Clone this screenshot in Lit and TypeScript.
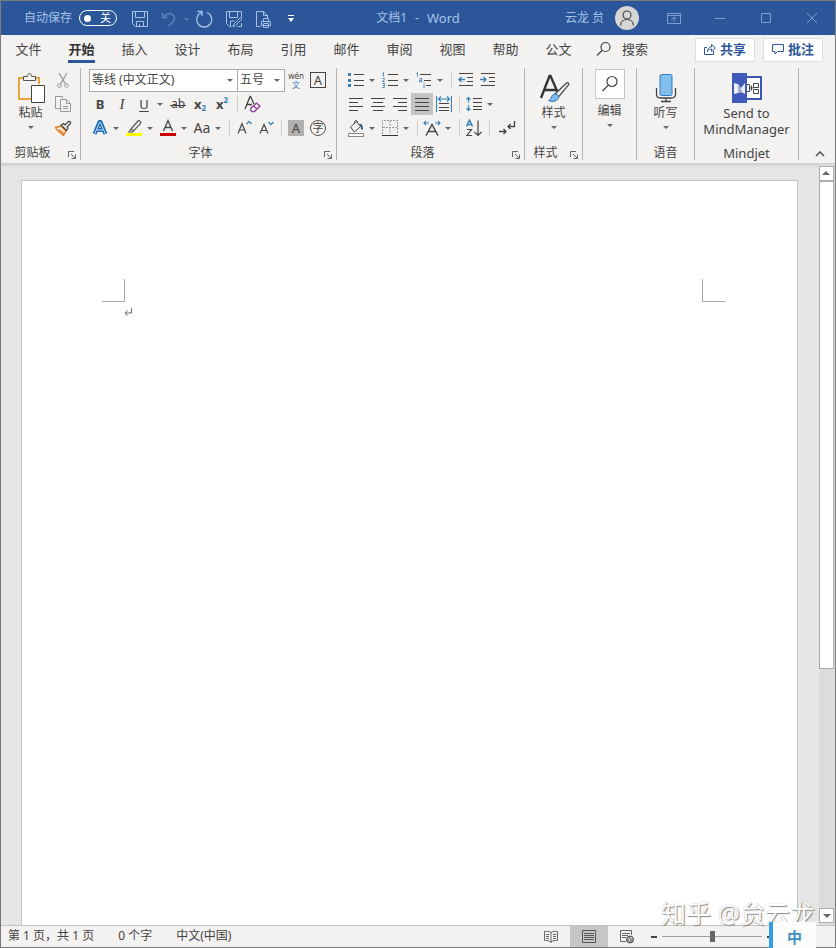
import { LitElement, html, css, svg, TemplateResult } from "lit";
import { customElement, state } from "lit/decorators.js";

const icon = (w: number, h: number, body: TemplateResult) =>
  html`<svg width=${w} height=${h} viewBox="0 0 ${w} ${h}" fill="none" stroke="currentColor" aria-hidden="true">${body}</svg>`;

const INK = "#444";
const BLUE = "#3a82b8";

/* ---- title bar ---- */
const saveIcon = icon(18, 18, svg`<path d="M1.5 1.5h15v15h-12l-3-3zM4.5 1.5v6h9v-6M5.5 16.500v-5h7v5M8.500 14v2.500"/>`);
const undoIcon = icon(16, 16, svg`<path stroke-width="1.500" d="M1.500 1.500v5h5M2 6.500C5 2 10 1.500 12.500 4.500s.5 6-5 10.500"/>`);
const redoIcon = icon(18, 18, svg`<path stroke-width="1.300" d="M2.500 1.500h4.500v4.500M6.500 2.500A7.500 7.500 0 1 0 12 2.500"/>`);
const saveEditIcon = icon(18, 18, svg`<path d="M6.500 16.500h-2l-3-3v-12h15v6M4.500 1.500v6h8v-6M5.500 16v-5h4M16.500 13v3.500h-4M15.500 7.500l1.500 1.500-6.500 6.500-2.500 1 1-2.500z"/>`);
const printIcon = icon(18, 18, svg`<path d="M5.500 16.500h-4v-15h7l4 4v3M8.500 1.500v4h4M8.500 11.500v-3h5v3M6.500 15.500v-4h9v4zM8.500 13.500h5v4h-5z"/>`);
const customizeIcon = icon(8, 8, svg`<path d="M1 .5h6"/><path fill="currentColor" stroke="none" d="M1 3h6l-3 4z"/>`);
const personIcon = icon(18, 18, svg`<g stroke="#4a4a4a" stroke-width="1.200"><circle cx="9" cy="6" r="4"/><path d="M2.500 16.500c.5-8 12.500-8 13 0"/></g>`);
const ribbonOptIcon = icon(14, 12, svg`<path d="M.5 1.500h13v10H.5zM.5 3.500h13M7 10V5M4.500 7.500L7 5l2.500 2.500"/>`);
const minIcon = icon(12, 12, svg`<path d="M1 6.500h10"/>`);
const maxIcon = icon(12, 12, svg`<path d="M1.500 1.500h9v9h-9z"/>`);
const closeIcon = icon(12, 12, svg`<path d="M1 1l10 10M11 1L1 11"/>`);

/* ---- tabs ---- */
const searchIcon = icon(16, 16, svg`<circle cx="9.500" cy="6" r="4.500" stroke-width="1.200"/><path stroke-width="1.300" d="M6.300 9.300L1 14.500"/>`);
const findIcon = icon(18, 18, svg`<circle cx="11" cy="6.500" r="5" stroke-width="1.200"/><path stroke-width="1.300" d="M7.400 10.100L1.500 16"/>`);
const shareIcon = icon(12, 12, svg`<path d="M3 4.500H.5v7h9V8M3.500 8.500C3.500 5 5.500 4 7.500 4V1.500l4 3.500-4 3.500V6C6 6 4.500 6.500 3.500 8.500z"/>`);
const commentIcon = icon(12, 12, svg`<path d="M.5 1.500h11v7h-6l-2.500 2.500V8.500H.5z"/>`);

/* ---- clipboard ---- */
const pasteIcon = icon(28, 32, svg`
  <path stroke="#e8a33d" stroke-width="2" d="M8 6H2v21h12M18 6h4v6"/>
  <path stroke="#fff" d="M3.500 25V7.500h3"/>
  <path stroke="#555" fill="#f3f2f1" d="M6.500 8.500v-4h4c0-4 4-4 4 0h4v4z"/>
  <path stroke="#444" fill="#fff" d="M14.500 13.500h13v17h-13z"/>`);
const cutIcon = icon(16, 16, svg`<g stroke="#999"><path stroke-width="1.300" d="M4 1l6.500 11M12 1L5.500 12"/><circle cx="4.500" cy="13.500" r="1.800"/><circle cx="11.500" cy="13.500" r="1.800"/></g>`);
const copyIcon = icon(18, 16, svg`<g stroke="#999"><path d="M6.500 12.500h-5v-12h7v2"/><path d="M6.500 3.500h6l4 4v8h-10zM12.500 3.500v4h4M9 10.500h5M9 12.500h5"/></g>`);
const painterIcon = icon(18, 18, svg`<path fill="#fbe3c8" stroke="#e07b28" stroke-width="1.300" d="M1.500 8.500L7 7l5 5-2.500 4.500C8 15 3 12 1.500 8.500zM5 11l5 3.500"/><path stroke="#444" stroke-width="1.200" d="M7 6l5.500 5.500 1.500-2.500-1-1 3.500-3.500c.5-1.500-.8-2.500-2-2L11 6l-1.500-1.500z" fill="#f3f2f1"/>`);

/* ---- font ---- */
const clearIcon = icon(18, 18, svg`<path stroke="#444" stroke-width="1.300" d="M2 14L7 1.500h.5L11 9M4 9.500h5"/><path stroke="#8c3a9e" stroke-width="1.300" fill="#f3f2f1" d="M8 13l5.500-5 3.500 3-5.500 5.500-2.500.2-1.500-1.700zM10.500 10.800l3.500 3.200"/>`);
const effectsIcon = icon(16, 16, svg`<path stroke="#1f6db5" stroke-width="4" stroke-linejoin="round" d="M2.500 14L7.500 2h1l5 12M4.500 10h7"/><path stroke="#bfe0f7" stroke-width="1" d="M2.500 14L7.500 2.500h1l5 11.500M4.500 10h7"/>`);
const highlightIcon = icon(18, 18, svg`<path stroke="#555" stroke-width="1.200" d="M6 10l7-8c1-1 3.500 1 2.500 2.500l-7 7.500zM6 10l-2 3h3.500l1-1"/><path fill="#ff0" stroke="none" d="M1 14h16v3H1z"/>`);
const fontColorIcon = icon(18, 18, svg`<path stroke="#444" stroke-width="1.300" d="M4.500 12L9 1.500 13.500 12M6 8.500h6"/><path fill="#c00" stroke="none" d="M1 14h16v3H1z"/>`);
const growIcon = icon(16, 16, svg`<path stroke="#444" stroke-width="1.200" d="M2 13.500L6 3.500l4 10M3.500 10h5"/><path stroke=${BLUE} stroke-width="1.300" d="M10.500 4l2.500-2.500L15.500 4"/>`);
const shrinkIcon = icon(16, 16, svg`<path stroke="#444" stroke-width="1.200" d="M2 13.500L6 4.500l4 9M3.500 10.500h5"/><path stroke=${BLUE} stroke-width="1.300" d="M10.500 2l2.500 2.500L15.500 2"/>`);

/* ---- paragraph ---- */
const lines = (x: number, ys: number[], w: number) => ys.map((y) => svg`<path stroke=${INK} d="M${x} ${y}.5h${w}"/>`);
const bulletsIcon = icon(16, 16, svg`${lines(6, [2, 8, 13], 10)}<path fill=${BLUE} stroke="none" d="M0 1h3v3H0zM0 7h3v3H0zM0 12h3v3H0z"/>`);
const numbersIcon = icon(16, 16, svg`${lines(6, [2, 8, 13], 10)}<path stroke=${BLUE} stroke-width=".9" d="M.5 1.500L1.500.5v4M.3 6.500h2v1.300L.5 9.500h2.200M.3 11.500h2v4h-2M1 13.500h1.300"/>`);
const multiIcon = icon(16, 16, svg`${lines(4, [2], 11)}${lines(8, [8], 7)}${lines(10, [13], 5)}<path stroke=${BLUE} stroke-width=".9" d="M.5 1.500L1.500.5v4M3.500 6.500h2.200v3.300H3.500V8.200h2M8 12v4M8 10v1"/>`);
const outdentIcon = icon(16, 16, svg`${lines(1, [1, 13], 14)}${lines(9, [5, 9], 6)}<path stroke=${BLUE} stroke-width="1.300" d="M1 7.500h6M3.500 5L1 7.500 3.500 10"/>`);
const indentIcon = icon(16, 16, svg`${lines(1, [1, 13], 14)}${lines(9, [5, 9], 6)}<path stroke=${BLUE} stroke-width="1.300" d="M0 7.500h6M3.500 5L6 7.500 3.500 10"/>`);
const leftIcon = icon(16, 16, svg`${lines(1, [2, 10], 14)}${lines(1, [6, 14], 9)}`);
const centerIcon = icon(16, 16, svg`${lines(1, [2, 10], 14)}${lines(3, [6, 14], 10)}`);
const rightIcon = icon(16, 16, svg`${lines(1, [2, 10], 14)}${lines(6, [6, 14], 9)}`);
const justifyIcon = icon(16, 16, svg`${lines(1, [2, 6, 10, 14], 14)}`);
const distributeIcon = icon(16, 18, svg`${lines(3, [8, 12, 15], 10)}<path stroke=${BLUE} stroke-width="1.200" d="M.5 1v16M15.500 1v16M2.500 4h11M5 1.500L2.500 4 5 6.500M11 1.500L13.500 4 11 6.500"/>`);
const spacingIcon = icon(16, 16, svg`${lines(7, [2, 6, 10, 13], 9)}<path stroke=${BLUE} stroke-width="1.200" d="M2.500 1v5.500M.5 3.500l2-2 2 2M2.500 9v6M.5 12.500l2 2 2-2"/>`);
const bucketIcon = icon(18, 18, svg`<path stroke="#444" d="M3.500 8l6-5.500 4 5-6 5.500zM7.500 5c-.5-4 3-5 3-1"/><path stroke="#1f5f99" stroke-width="2" d="M12.500 5.500c2 0 2.500 2 2.500 5"/><path stroke="#888" fill="#fff" d="M1.500 14.500h15v3h-15z"/>`);
const bordersIcon = icon(16, 16, svg`<path stroke="#999" stroke-dasharray="2 1" d="M.5 14V.5h15V14M8 1v13M1 7.500h14"/><path stroke="#333" d="M0 15.500h16"/>`);
const asianIcon = icon(18, 18, svg`<path stroke="#444" stroke-width="1.500" d="M3 16.500L9 5.500l6 11M5.500 12.500h7"/><path stroke=${BLUE} stroke-width="1.200" d="M1 4h5M3 1.800L1 4l2 2.200M12 4h5M15 1.800L17 4l-2 2.200"/>`);
const sortIcon = icon(18, 18, svg`<path stroke=${BLUE} stroke-width="1.500" d="M1.500 7.500L4.500 1l3 6.500M2.500 5.500h4"/><path stroke="#444" stroke-width="1.200" d="M2 10.500h4.500L2 16.500h5M13 1.500v15M9.500 13l3.500 3.500 3.500-3.500"/>`);
const marksIcon = icon(18, 18, svg`<path stroke="#444" stroke-width="1.300" d="M16.500 2v5.500H10M12.500 5L10 7.500l2.500 2.500M1 12.500h7M5.500 10L8 12.500 5.500 15"/>`);

/* ---- large buttons ---- */
const stylesIcon = icon(32, 32, svg`
  <path stroke="#333" stroke-width="2.300" d="M3 26L11.500 4h1L20 21M6 18h12"/>
  <path stroke="#444" fill="#f3f2f1" stroke-width="1.200" d="M17 22L28.500 11c1.500-1 3 .5 2 2L20.500 25z"/>
  <path stroke="#1f6db5" fill="#83beec" d="M10.500 28.500c3 0 2-6 6.500-6.500 3 0 5 3 2.500 5.500-2 2-6 2.500-9 1z"/>`);
const micIcon = icon(22, 30, svg`
  <rect x="5" y="1.500" width="12" height="21" rx="1.500" fill="#83beec" stroke="#2b7cc1"/>
  <path stroke="#444" stroke-width="1.300" d="M1.500 15v6q0 4 4 4h11q4 0 4-4v-6M11 25v4M6 28.500h10"/>`);
const mindIcon = icon(30, 30, svg`
  <path fill="#fff" stroke="#3b55b0" stroke-width="2" d="M14 4h15v22H14z"/>
  <path fill="#3f5abb" stroke="none" d="M0 0h15v30H0z"/>
  <path fill="#e9edf7" stroke="none" d="M2 10l4 1 3 4 4-5v11l-4-2-3 1-4 1z"/><path fill="#9fb0d8" stroke="none" d="M6 11l3 4 1 4-4 1z"/>
  <path stroke="#444" d="M15 11.500h2.500v7H15M17.500 15h4M19.500 12.500v5M21.500 10.500h5v4h-5zM21.500 16.500h5v4h-5z"/>`);
const launcherIcon = icon(8, 8, svg`<path stroke="#666" d="M.5 6V.5H6M3 3l4 4M7.500 3.500v4h-4"/>`);
const collapseIcon = icon(10, 6, svg`<path stroke="#555" stroke-width="1.600" d="M1 5l4-4 4 4"/>`);

/* ---- status bar ---- */
const readIcon = icon(14, 13, svg`<path stroke="#666" d="M7 2.500C5 1 3 1.500.5 1.500v9c2.500 0 4.500 0 6.500 1.500 2-1.500 4-1.500 6.500-1.500v-9c-2.500 0-4.500-.5-6.500 1zM7 2.500V13M2 4.500h3M2 6.500h3M2 8.500h3M9 4.500h3M9 6.500h3M9 8.500h3"/>`);
const printViewIcon = icon(14, 13, svg`<path stroke="#555" d="M.5.5h13v12H.5zM2 3.500h10M2 5.500h10M2 7.500h10M2 9.500h10"/>`);
const webIcon = icon(14, 14, svg`<path stroke="#666" d="M6 11.500H.5V.5h11V5M2 3.500h8M2 5.500h6M2 7.500h4"/><circle cx="10" cy="9.500" r="3.500" fill="#888" stroke="#555"/><path stroke="#ddd" d="M8 8l2 1.500-1 2M11 7l1 2"/>`);

@customElement("app-root")
export class AppRoot extends LitElement {
  @state() private tab = "开始";

  static styles = css`
    :host {
      display: block;
      height: 100vh;
      font: 12px/16px "Noto Sans", "Noto Sans CJK SC", sans-serif;
      color: #444;
    }
    * { box-sizing: border-box; }
    svg { display: block; flex: none; }
    button, select, input { font: inherit; color: inherit; margin: 0; }
    button {
      display: flex; align-items: center; justify-content: center;
      border: 0; padding: 0; background: none; white-space: nowrap;
    }
    .window {
      position: relative; height: 100%; min-width: 834px;
      display: flex; flex-direction: column;
      border: 1px solid #7b7b7b; background: #f3f2f1;
    }
    .titlebar {
      flex: none; height: 34px; display: grid; grid-template-columns: 1fr auto 1fr;
      align-items: center; background: #2b579a; color: #a9c1e6;
    }
    .quick { display: flex; align-items: center; padding-left: 23px; }
    .autosave { display: flex; align-items: center; gap: 7px; margin-right: 8px; }
    .toggle {
      display: flex; align-items: center; justify-content: space-between;
      width: 38px; height: 16px; padding: 0 5px 0 4px;
      border: 1px solid #fff; border-radius: 8px; color: #fff; font-size: 11px;
    }
    .toggle input { appearance: none; width: 7px; height: 7px; border-radius: 4px; background: #fff; }
    .quick button { width: 30px; height: 30px; padding-top: 2px; }
    .quick .undo { width: 28px; color: #5c80ba; }
    .quick .undo-menu { width: 6px; color: #5c80ba; }
    .quick .customize { width: 24px; color: #fff; }
    .doc-title { display: flex; gap: 8px; }
    .doc-title b { font-weight: 400; font-size: 13px; }
    .account { display: flex; align-items: center; justify-content: flex-end; }
    .avatar {
      width: 24px; height: 24px; margin: 0 12px 0 11px; border-radius: 12px; background: #d8d6d4;
    }
    .caption { width: 46px; height: 34px; color: #7f9fd0; }

    .tabs { flex: none; height: 31px; display: flex; padding: 0 12px 0 1px; font-size: 13px; }
    .tab { width: 53px; height: 30px; padding-bottom: 3px; position: relative; }
    .tab.active { font-weight: 700; color: #333; }
    .tab.active::after {
      content: ""; position: absolute; left: 13px; right: 13px; bottom: 2px; height: 3px; background: #2b579a;
    }
    .search { gap: 10px; margin-left: 11px; height: 30px; padding-bottom: 3px; }
    .actions { display: flex; gap: 8px; margin: 3px 0 0 auto; }
    .actions button {
      width: 60px; height: 24px; padding-bottom: 2px; gap: 4px; border: 1px solid #e1dfdd; background: #fff;
      color: #2b579a; font-weight: 700;
    }

    .ribbon {
      flex: none; height: 98px; display: flex; padding: 2px 0 3px; border-bottom: 1px solid #d2d0ce;
    }
    .group {
      flex: none; display: flex; flex-direction: column; border-right: 1px solid #b5b3b1;
    }
    .g-clip { width: 80px; }
    .g-font { width: 256px; }
    .g-para { width: 188px; }
    .g-style { width: 58px; }
    .g-edit { width: 54px; }
    .g-voice { width: 58px; }
    .g-mind { width: 104px; }
    .body { flex: 1; display: flex; }
    .rows { display: flex; flex-direction: column; padding-left: 8px; }
    .row { display: flex; align-items: center; height: 24px; }
    .foot { display: flex; height: 16px; line-height: 18px; }
    .foot span { flex: 1; text-align: center; }
    .foot button { width: 16px; height: 22px; }
    .latin { font-size: 13px; }
    .tool { width: 22px; height: 22px; }
    .tool.wide { width: 28px; }
    .tool.on { background: #c5c3c1; }
    .menu { width: 12px; height: 22px; justify-content: flex-start; padding-left: 2px; }
    .sep { width: 8px; height: 18px; display: flex; justify-content: center; }
    .sep::before { content: ""; width: 1px; background: #d2d0ce; }
    .arrow { width: 0; height: 0; border: 3px solid transparent; border-top-color: #666; border-bottom-width: 0; }
    .combo { position: relative; height: 23px; border: 1px solid #ababab; background: #fff; }
    .combo + .combo { border-left: 0; }
    .combo.face { width: 149px; }
    .combo.size { width: 47px; }
    .combo select {
      appearance: none; width: 100%; height: 21px; padding: 0 2px; border: 0; background: none; outline: 0;
    }
    .combo .arrow { position: absolute; right: 4px; top: 9px; pointer-events: none; }
    .bold { font-weight: 700; font-size: 13px; }
    .italic { font: italic 15px/16px "Liberation Serif", serif; }
    .underline { text-decoration: underline; font-size: 13px; text-underline-offset: 2px; }
    .strike span { padding: 0 1px; background: linear-gradient(#444, #444) center 9px / 100% 1px no-repeat; }
    .script { font-weight: 700; font-size: 13px; }
    .script small { font-size: 8px; color: #3a82b8; }
    .script .low { padding-top: 8px; }
    .script .high { padding-bottom: 8px; }
    .pinyin { flex-direction: column; font-size: 8px; line-height: 9px; }
    .pinyin em { font-style: normal; color: #3a82b8; }
    .case { font-size: 14px; }
    .boxed { width: 16px; height: 16px; border: 1px solid #444; line-height: 14px; font-size: 13px; }
    .shaded { width: 16px; height: 16px; background: #b1b0af; font-size: 13px; }
    .circled { width: 16px; height: 16px; border: 1px solid #555; border-radius: 8px; font-size: 11px; line-height: 14px; }

    .large { flex: 1; flex-direction: column; justify-content: flex-start; height: 70px; }
    .large .pic { height: 37px; display: flex; align-items: center; justify-content: center; padding-top: 2px; }
    .large .arrow { margin-top: 5px; }
    .large .search-box { width: 30px; height: 30px; margin: 1px 0 4px; padding: 0; border: 1px solid #c8c6c4; background: #fff; }
    .large.paste { flex: none; width: 43px; margin-left: 8px; }
    .column { display: flex; flex-direction: column; }
    .column .tool { height: 24px; }
    .collapse { margin: auto 0 0 auto; width: 30px; height: 12px; }

    .work { flex: 1; min-height: 0; display: flex; background: #e6e6e6; box-shadow: inset 0 3px 3px -2px #c4c4c4; }
    .canvas { flex: 1; display: flex; padding: 16px 21px 0 20px; }
    .page { flex: 1; border: 1px solid #c3c3c3; border-bottom: 0; background: #fff; }
    .marks { display: flex; justify-content: space-between; padding: 98px 72px 0 80px; }
    .corner { width: 23px; height: 23px; border-bottom: 1px solid #aaa; }
    .corner.left { border-right: 1px solid #aaa; }
    .corner.right { border-left: 1px solid #aaa; }
    .pilcrow { margin: 6px 0 0 102px; color: #666; }
    .scroll { width: 16px; flex: none; display: flex; flex-direction: column; padding: 2px 1px 2px 0; background: #dcdcdc; }
    .scroll button { height: 15px; flex: none; border: 1px solid #ababab; background: #fff; }
    .scroll .up { transform: rotate(180deg); }
    .scroll .arrow { border-width: 4px 4px 0; }
    .thumb { flex: 67; border: 1px solid #ababab; background: #fff; }
    .track { flex: 33; }

    .status {
      flex: none; height: 22px; display: flex; align-items: center; padding: 0 57px 0 7px;
      border-top: 1px solid #c6c4c2;
    }
    .status span { margin-right: 24px; padding-bottom: 2px; }
    .views { display: flex; margin-left: auto; }
    .views button { width: 38px; height: 21px; }
    .views .on { background: #c8c6c4; }
    .zoom-btn { width: 16px; height: 20px; }
    .zoom { appearance: none; width: 100px; height: 20px; background: linear-gradient(#a0a0a0, #a0a0a0) center / 100% 1px no-repeat; }
    .zoom::-webkit-slider-thumb { appearance: none; width: 5px; height: 11px; background: #666; }

    .ime {
      position: absolute; right: 19px; bottom: -1px; width: 47px; height: 26px;
      display: flex; align-items: center; justify-content: center; padding-top: 4px;
      border-left: 4px solid #2f9fe8; background: #fcfcfc; color: #3f8fc4; font-size: 15px; font-weight: 700;
    }
    .watermark {
      position: absolute; right: 20px; bottom: 20px; font-size: 25px; line-height: 28px; white-space: nowrap;
      color: #fff; text-shadow: 1px 1px 1px #888, 0 0 1px #aaa; pointer-events: none;
    }
  `;

  private tool(label: string, content: unknown, cls = "") {
    return html`<button class="tool ${cls}" aria-label=${label} title=${label}>${content}</button>`;
  }
  private menu(label: string) {
    return html`<button class="menu" aria-label="${label}选项"><i class="arrow"></i></button>`;
  }
  private foot(label: string, launcher = true, cls = "") {
    return html`<div class="foot ${cls}"><span>${label}</span>${launcher
      ? html`<button aria-label="${label}设置">${launcherIcon}</button>` : ""}</div>`;
  }

  private titlebar() {
    return html`<header class="titlebar">
      <div class="quick">
        <label class="autosave">自动保存
          <span class="toggle"><input type="checkbox" role="switch" />关</span>
        </label>
        <button aria-label="保存">${saveIcon}</button>
        <button class="undo" aria-label="撤消">${undoIcon}</button>
        <button class="undo-menu" aria-label="撤消选项">${icon(5, 3, svg`<path fill="currentColor" stroke="none" d="M0 0h5L2.500 3z"/>`)}</button>
        <button aria-label="重复">${redoIcon}</button>
        <button aria-label="另存为">${saveEditIcon}</button>
        <button aria-label="打印预览">${printIcon}</button>
        <button class="customize" aria-label="自定义快速访问工具栏">${customizeIcon}</button>
      </div>
      <div class="doc-title"><span>文档1</span><span>-</span><b>Word</b></div>
      <div class="account">
        <span>云龙 贠</span>
        <button class="avatar" aria-label="帐户">${personIcon}</button>
        <button class="caption" aria-label="功能区显示选项">${ribbonOptIcon}</button>
        <button class="caption" aria-label="最小化">${minIcon}</button>
        <button class="caption" aria-label="最大化">${maxIcon}</button>
        <button class="caption" aria-label="关闭">${closeIcon}</button>
      </div>
    </header>`;
  }

  private tabs() {
    const names = ["文件", "开始", "插入", "设计", "布局", "引用", "邮件", "审阅", "视图", "帮助", "公文"];
    return html`<nav class="tabs">
      ${names.map((n) => html`<button class="tab ${n === this.tab ? "active" : ""}" @click=${() => (this.tab = n)}>${n}</button>`)}
      <button class="search">${searchIcon}搜索</button>
      <div class="actions">
        <button>${shareIcon}共享</button>
        <button>${commentIcon}批注</button>
      </div>
    </nav>`;
  }

  private ribbon() {
    const sep = html`<i class="sep"></i>`;
    return html`<section class="ribbon">
      <div class="group g-clip">
        <div class="body">
          <button class="large paste"><span class="pic">${pasteIcon}</span>粘贴<i class="arrow"></i></button>
          <div class="column">${this.tool("剪切", cutIcon)}${this.tool("复制", copyIcon)}${this.tool("格式刷", painterIcon)}</div>
        </div>
        ${this.foot("剪贴板")}
      </div>
      <div class="group g-font">
        <div class="body rows">
          <div class="row">
            <div class="combo face"><select aria-label="字体"><option>等线 (中文正文)</option></select><i class="arrow"></i></div>
            <div class="combo size"><select aria-label="字号"><option>五号</option></select><i class="arrow"></i></div>
            ${this.tool("拼音指南", html`wén<em>文</em>`, "pinyin")}
            ${this.tool("字符边框", html`<span class="boxed">A</span>`)}
          </div>
          <div class="row">
            ${this.tool("加粗", "B", "bold")}${this.tool("倾斜", "I", "italic")}${this.tool("下划线", "U", "underline")}${this.menu("下划线")}
            ${this.tool("删除线", html`<span>ab</span>`, "strike")}
            ${this.tool("下标", html`x<small class="low">2</small>`, "script")}
            ${this.tool("上标", html`x<small class="high">2</small>`, "script")}
            ${sep}${this.tool("清除格式", clearIcon)}
          </div>
          <div class="row">
            ${this.tool("文本效果", effectsIcon)}${this.menu("文本效果")}
            ${this.tool("突出显示", highlightIcon)}${this.menu("突出显示")}
            ${this.tool("字体颜色", fontColorIcon)}${this.menu("字体颜色")}
            ${this.tool("更改大小写", "Aa", "case")}${this.menu("更改大小写")}
            ${sep}${this.tool("增大字号", growIcon)}${this.tool("减小字号", shrinkIcon)}
            ${sep}${this.tool("字符底纹", html`<span class="shaded">A</span>`)}
            ${this.tool("带圈字符", html`<span class="circled">字</span>`)}
          </div>
        </div>
        ${this.foot("字体")}
      </div>
      <div class="group g-para">
        <div class="body rows">
          <div class="row">
            ${this.tool("项目符号", bulletsIcon)}${this.menu("项目符号")}${this.tool("编号", numbersIcon)}${this.menu("编号")}
            ${this.tool("多级列表", multiIcon)}${this.menu("多级列表")}${sep}
            ${this.tool("减少缩进量", outdentIcon)}${this.tool("增加缩进量", indentIcon)}
          </div>
          <div class="row">
            ${this.tool("左对齐", leftIcon)}${this.tool("居中", centerIcon)}${this.tool("右对齐", rightIcon)}
            ${this.tool("两端对齐", justifyIcon, "on")}${this.tool("分散对齐", distributeIcon)}${sep}
            ${this.tool("行距", spacingIcon)}${this.menu("行距")}
          </div>
          <div class="row">
            ${this.tool("底纹", bucketIcon)}${this.menu("底纹")}${this.tool("边框", bordersIcon)}${this.menu("边框")}${sep}
            ${this.tool("中文版式", asianIcon)}${this.menu("中文版式")}${sep}${this.tool("排序", sortIcon)}${sep}
            ${this.tool("显示编辑标记", marksIcon, "wide")}
          </div>
        </div>
        ${this.foot("段落")}
      </div>
      <div class="group g-style">
        <div class="body"><button class="large"><span class="pic">${stylesIcon}</span>样式<i class="arrow"></i></button></div>
        ${this.foot("样式")}
      </div>
      <div class="group g-edit">
        <div class="body"><button class="large"><span class="pic search-box">${findIcon}</span>编辑<i class="arrow"></i></button></div>
      </div>
      <div class="group g-voice">
        <div class="body"><button class="large"><span class="pic">${micIcon}</span>听写<i class="arrow"></i></button></div>
        ${this.foot("语音", false)}
      </div>
      <div class="group g-mind">
        <div class="body"><button class="large latin"><span class="pic">${mindIcon}</span>Send to<br />MindManager</button></div>
        ${this.foot("Mindjet", false, "latin")}
      </div>
      <button class="collapse" aria-label="折叠功能区">${collapseIcon}</button>
    </section>`;
  }

  render() {
    return html`<div class="window">
      ${this.titlebar()}${this.tabs()}${this.ribbon()}
      <main class="work">
        <div class="canvas">
          <article class="page">
            <div class="marks"><i class="corner left"></i><i class="corner right"></i></div>
            <div class="pilcrow">${icon(8, 8, svg`<path d="M7.500 0v5H1M3.500 2.500L1 5l2.500 2.500"/>`)}</div>
          </article>
        </div>
        <div class="scroll">
          <button class="up" aria-label="向上滚动"><i class="arrow"></i></button>
          <div class="thumb"></div>
          <div class="track"></div>
          <button aria-label="向下滚动"><i class="arrow"></i></button>
        </div>
      </main>
      <footer class="status">
        <span>第 1 页，共 1 页</span><span>0 个字</span><span>中文(中国)</span>
        <div class="views">
          <button aria-label="阅读视图">${readIcon}</button>
          <button class="on" aria-label="页面视图">${printViewIcon}</button>
          <button aria-label="Web 版式视图">${webIcon}</button>
        </div>
        <button class="zoom-btn" aria-label="缩小">${icon(6, 2, svg`<path stroke-width="2" d="M0 1h6"/>`)}</button>
        <input class="zoom" type="range" min="10" max="190" value="100" aria-label="缩放" />
        <button class="zoom-btn" aria-label="放大">${icon(6, 6, svg`<path stroke-width="2" d="M0 3h6M3 0v6"/>`)}</button>
      </footer>
      <div class="watermark">知乎 @贠云龙</div>
      <div class="ime">中</div>
    </div>`;
  }
}
